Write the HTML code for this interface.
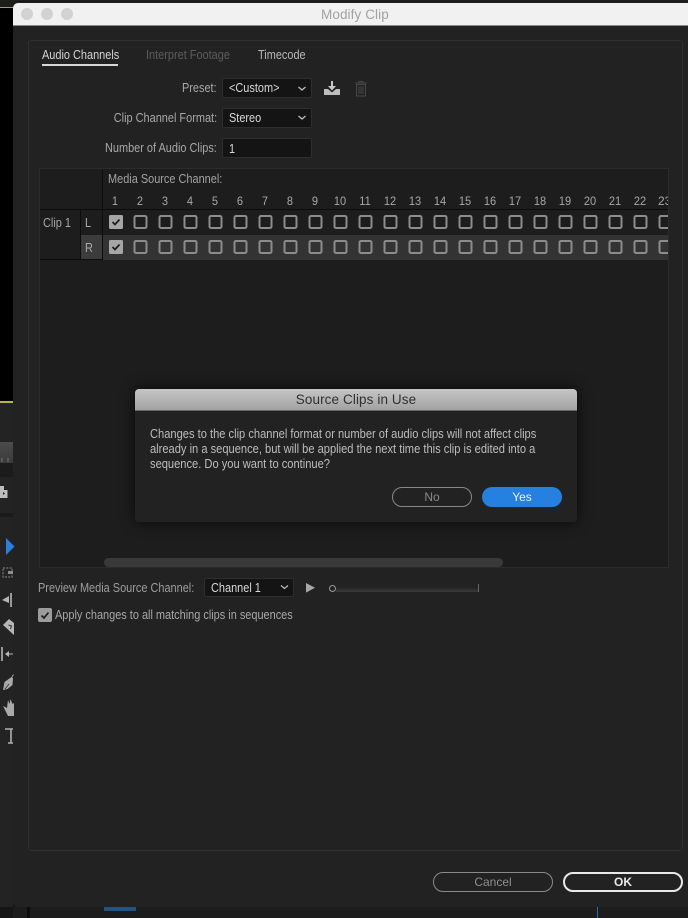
<!DOCTYPE html>
<html><head><meta charset="utf-8"><style>
html,body{margin:0;padding:0;background:#1a1a1a}
#p{position:relative;width:688px;height:918px;overflow:hidden;background:#161616;font-family:"Liberation Sans",sans-serif;font-size:12.5px;color:#b4b4b4}
#p div{position:absolute;white-space:nowrap}
.t{transform:scaleX(.875);transform-origin:left center}
.r{text-align:right;transform:scaleX(.875);transform-origin:right center}
.sel{background:#141414;border:1px solid #2e2e2e;border-radius:2px;box-sizing:border-box}
.n{top:194px;width:24px;text-align:center;color:#a8a8a8;font-size:12px;transform:scaleX(.92)}
</style></head><body><div id="p">

<!-- backdrop left -->
<div style="left:0;top:0;width:688px;height:3px;background:#1d1d1d"></div>
<div style="left:0;top:3px;width:13px;height:5px;background:#1d1d1d"></div>
<div style="left:0;top:8px;width:13px;height:393px;background:#000"></div>
<div style="left:0;top:7px;width:14px;height:1px;background:#a9a52e"></div>
<div style="left:0;top:401px;width:13px;height:1.5px;background:#b9b53a"></div>
<div style="left:0;top:403px;width:13px;height:504px;background:#232323"></div>
<div style="left:0;top:442px;width:13px;height:21px;background:linear-gradient(#4c4c4c,#3a3a3a)"></div>
<div style="left:0;top:463px;width:13px;height:14px;background:#1b1b1b"></div>
<div style="left:0;top:513px;width:13px;height:4px;background:#1a1a1a"></div>
<!-- backdrop bottom -->
<div style="left:13px;top:907px;width:675px;height:11px;background:#1c1c1c"></div>
<div style="left:27px;top:907px;width:3px;height:11px;background:#0c0c0c"></div>
<div style="left:104px;top:906px;width:32px;height:5px;background:#1e5585"></div>
<div style="left:597px;top:907px;width:1px;height:11px;background:#2a6bb0"></div>

<!-- window -->
<div style="left:13px;top:3px;width:675px;height:904px;background:#222;border-radius:5px 0 0 5px"></div>
<div style="left:13px;top:3px;width:675px;height:22px;background:#f1f1f1;border-radius:5px 0 0 0;border-bottom:1px solid #8a8a8a"></div>
<div style="left:21px;top:8px;width:12px;height:12px;border-radius:50%;background:#d2d2d2"></div>
<div style="left:41px;top:8px;width:12px;height:12px;border-radius:50%;background:#d2d2d2"></div>
<div style="left:61px;top:8px;width:12px;height:12px;border-radius:50%;background:#d2d2d2"></div>
<div style="left:321px;top:7px;font-size:13.5px;color:#a2a2a2;letter-spacing:.1px">Modify Clip</div>

<svg style="position:absolute;left:0;top:440px" width="15" height="310" viewBox="0 440 15 310">
<path d="M2 458v4M8 458v4" stroke="#777" stroke-width="1"/>
<path d="M0 486h4v4h3.500v8H0z" fill="#bdbdbd"/><path d="M3 492l2 1.500-2 1.500z" fill="#222"/>
<path d="M6 538l8.500 8.500-8.500 8.500z" fill="#2a7fe0"/>
<path d="M3 568h9v9H3z" fill="none" stroke="#7a7a7a" stroke-width="1.200" stroke-dasharray="2 1.300"/><path d="M8 571h5v3H8z" fill="#8e8e8e"/>
<path d="M2 600l7-4v7z" fill="#b5b5b5"/><path d="M11 593v14" stroke="#b5b5b5" stroke-width="1.600"/>
<path d="M3 625l6-6 5 4v12z" fill="#b5b5b5"/><path d="M8.500 625l3 1-1 3" stroke="#333" fill="none"/>
<path d="M2 647v14" stroke="#b5b5b5" stroke-width="1.600"/><path d="M6 654h7" stroke="#b5b5b5"/><path d="M5 654l4-3v6z" fill="#b5b5b5"/>
<path d="M3 690l1.500-8 7-5 1.500 1-.5 7-5 4z" fill="#a9a9a9"/><path d="M12 677l1.500-2.500" stroke="#999"/><path d="M5 689l4-5" stroke="#333" stroke-width=".8"/>
<path d="M3 706l4 2 1-8 1.500 4 1-5 2 5 1.500-1V716H8z" fill="#a9a9a9"/>
<path d="M5 729h8M11 729v14M8 743h5" stroke="#b0b0b0" stroke-width="1.600" fill="none"/>
</svg>

<!-- panel -->
<div style="left:28px;top:40px;width:655px;height:811px;border:1px solid #2e2e2e;border-radius:3px;box-sizing:border-box"></div>

<!-- tabs -->
<div class="t" style="left:42px;top:48px;color:#d4d4d4">Audio Channels</div>
<div style="left:42px;top:64px;width:76px;height:2px;background:#d8d8d8"></div>
<div class="t" style="left:146px;top:48px;color:#5c5c5c">Interpret Footage</div>
<div class="t" style="left:258px;top:48px;color:#b8b8b8">Timecode</div>

<!-- form -->
<div class="r" style="right:471px;top:81px;color:#a8a8a8">Preset:</div>
<div class="sel" style="left:222px;top:78px;width:90px;height:20px"></div>
<div class="t" style="left:229px;top:81px;color:#d8d8d8">&lt;Custom&gt;</div>
<div class="r" style="right:471px;top:111px;color:#a8a8a8">Clip Channel Format:</div>
<div class="sel" style="left:222px;top:108px;width:90px;height:20px"></div>
<div class="t" style="left:229px;top:111px;color:#d8d8d8">Stereo</div>
<div class="r" style="right:471px;top:141px;color:#a8a8a8">Number of Audio Clips:</div>
<div class="sel" style="left:222px;top:138px;width:90px;height:20px"></div>
<div class="t" style="left:229px;top:142px;color:#d8d8d8">1</div>
<svg style="position:absolute;left:295px;top:82px" width="16" height="40" fill="none" stroke="#bdbdbd" stroke-width="1.300"><path d="M3.500 5l3.500 3 3.500-3"/><path d="M3.500 34l3.500 3 3.500-3"/></svg>
<svg style="position:absolute;left:323px;top:80px" width="46" height="17">
<path d="M9 1v7" stroke="#c8c8c8" stroke-width="2"/><path d="M5 6h8l-4 4.500z" fill="#c8c8c8"/>
<path d="M1 9h4l4 3.500 4-3.500h4v6H1z" fill="#bdbdbd"/>
<g stroke="#484848" fill="none"><path d="M32 3h12M36 3V1.500h4V3M33.500 4.500h9V16h-9zM36 6.500v7.500M38 6.500v7.500M40 6.500v7.500"/></g>
</svg>

<!-- grid box -->
<div style="left:39px;top:168px;width:630px;height:400px;background:#1d1d1d;border:1px solid #2c2c2c;box-sizing:border-box"></div>
<div style="left:102px;top:169px;width:1px;height:91px;background:#0c0c0c"></div>
<div style="left:40px;top:209px;width:628px;height:1px;background:#0c0c0c"></div>
<div style="left:40px;top:259px;width:63px;height:1px;background:#0c0c0c"></div>
<div style="left:80px;top:210px;width:1px;height:50px;background:#0c0c0c"></div>
<div style="left:81px;top:235px;width:21px;height:24px;background:#3c3c3c"></div>
<div style="left:103px;top:235px;width:565px;height:25px;background:#333"></div>
<div class="t" style="left:108px;top:172px;color:#a2a2a2">Media Source Channel:</div>
<div class="t" style="left:43px;top:216px;color:#a8a8a8">Clip 1</div>
<div class="t" style="left:85px;top:216px;color:#a8a8a8">L</div>
<div class="t" style="left:85px;top:241px;color:#a8a8a8">R</div>

<div class="n" style="left:103px">1</div><div class="n" style="left:128px">2</div><div class="n" style="left:153px">3</div><div class="n" style="left:178px">4</div><div class="n" style="left:203px">5</div><div class="n" style="left:228px">6</div><div class="n" style="left:253px">7</div><div class="n" style="left:278px">8</div><div class="n" style="left:303px">9</div><div class="n" style="left:328px">10</div><div class="n" style="left:353px">11</div><div class="n" style="left:378px">12</div><div class="n" style="left:403px">13</div><div class="n" style="left:428px">14</div><div class="n" style="left:453px">15</div><div class="n" style="left:478px">16</div><div class="n" style="left:503px">17</div><div class="n" style="left:528px">18</div><div class="n" style="left:553px">19</div><div class="n" style="left:578px">20</div><div class="n" style="left:603px">21</div><div class="n" style="left:628px">22</div>
<div style="left:653px;top:194px;width:15px;overflow:hidden;color:#a8a8a8;font-size:12px;padding-left:5px;box-sizing:border-box">23</div>

<svg style="position:absolute;left:103px;top:210px" width="565" height="50">
<defs><pattern id="b" x="-.5" y="-.5" width="25" height="25" patternUnits="userSpaceOnUse"><rect x="7" y="6.500" width="12" height="12" rx="1.500" fill="none" stroke="#8c8c8c" stroke-width="2"/></pattern></defs>
<rect x="25" y="0" width="540" height="50" fill="url(#b)"/>
<rect x="6" y="5" width="14" height="14" rx="1.500" fill="#a6a6a6"/><path d="M9.500 12l2.500 2.500 4.500-5" stroke="#1c1c1c" stroke-width="1.700" fill="none"/>
<rect x="6" y="30" width="14" height="14" rx="1.500" fill="#a6a6a6"/><path d="M9.500 37l2.500 2.500 4.500-5" stroke="#1c1c1c" stroke-width="1.700" fill="none"/>
</svg>

<!-- scrollbar -->
<div style="left:104px;top:558px;width:399px;height:9px;background:#393939;border-radius:5px"></div>

<!-- preview row -->
<div class="t" style="left:38px;top:581px;color:#9e9e9e">Preview Media Source Channel:</div>
<div class="sel" style="left:204px;top:578px;width:90px;height:19px"></div>
<div class="t" style="left:211px;top:581px;color:#d8d8d8">Channel 1</div>
<svg style="position:absolute;left:278px;top:584px" width="14" height="8" fill="none" stroke="#bdbdbd" stroke-width="1.200"><path d="M3 1.500l3.500 3 3.500-3"/></svg>
<svg style="position:absolute;left:305px;top:582px" width="11" height="12"><path d="M1 1l9 4.800-9 4.800z" fill="#a8a8a8"/></svg>
<div style="left:336px;top:584px;width:143px;height:8px;background:linear-gradient(#222 40%,#3a3a3a 100%);border-right:1px solid #666;box-sizing:border-box"></div>
<div style="left:329px;top:585px;width:5px;height:5px;border:1px solid #999;border-radius:50%;background:#222"></div>

<!-- apply -->
<svg style="position:absolute;left:38px;top:608px" width="14" height="14"><rect width="14" height="14" rx="2" fill="#9c9c9c"/><path d="M3.500 7.500l2.500 2.500 4.500-5.500" stroke="#1c1c1c" stroke-width="1.700" fill="none"/></svg>
<div class="t" style="left:55px;top:608px;color:#a8a8a8">Apply changes to all matching clips in sequences</div>

<!-- footer buttons -->
<div style="left:433px;top:872px;width:120px;height:20px;border:1.500px solid #8a8a8a;border-radius:11px;box-sizing:border-box;text-align:center;line-height:18px;color:#8e8e8e;font-size:12px">Cancel</div>
<div style="left:563px;top:872px;width:120px;height:20px;border:2px solid #e8e8e8;border-radius:11px;box-sizing:border-box;text-align:center;line-height:17px;color:#e8e8e8;font-weight:bold;font-size:12px">OK</div>

<!-- modal -->
<div style="left:135px;top:389px;width:442px;height:133px;background:#222;border-radius:4px;box-shadow:0 0 14px rgba(0,0,0,.75)"></div>
<div style="left:135px;top:389px;width:442px;height:22px;background:linear-gradient(#c6c6c6,#a2a2a2);border-radius:4px 4px 0 0;border-bottom:1px solid #666;box-sizing:border-box;text-align:center;line-height:22px;font-size:13.5px;color:#303030;letter-spacing:.1px">Source Clips in Use</div>
<div style="left:150px;top:427px;color:#bdbdbd;line-height:15px;font-size:12.5px;transform:scaleX(.89);transform-origin:left top">Changes to the clip channel format or number of audio clips will not affect clips<br>already in a sequence, but will be applied the next time this clip is edited into a<br>sequence. Do you want to continue?</div>
<div style="left:392px;top:487px;width:80px;height:20px;border:1.500px solid #888;border-radius:11px;box-sizing:border-box;text-align:center;line-height:18px;color:#8a8a8a;font-size:12px">No</div>
<div style="left:482px;top:487px;width:80px;height:20px;background:#2680e0;border-radius:11px;text-align:center;line-height:20px;color:#eef;font-size:12px">Yes</div>
</div></body></html>
